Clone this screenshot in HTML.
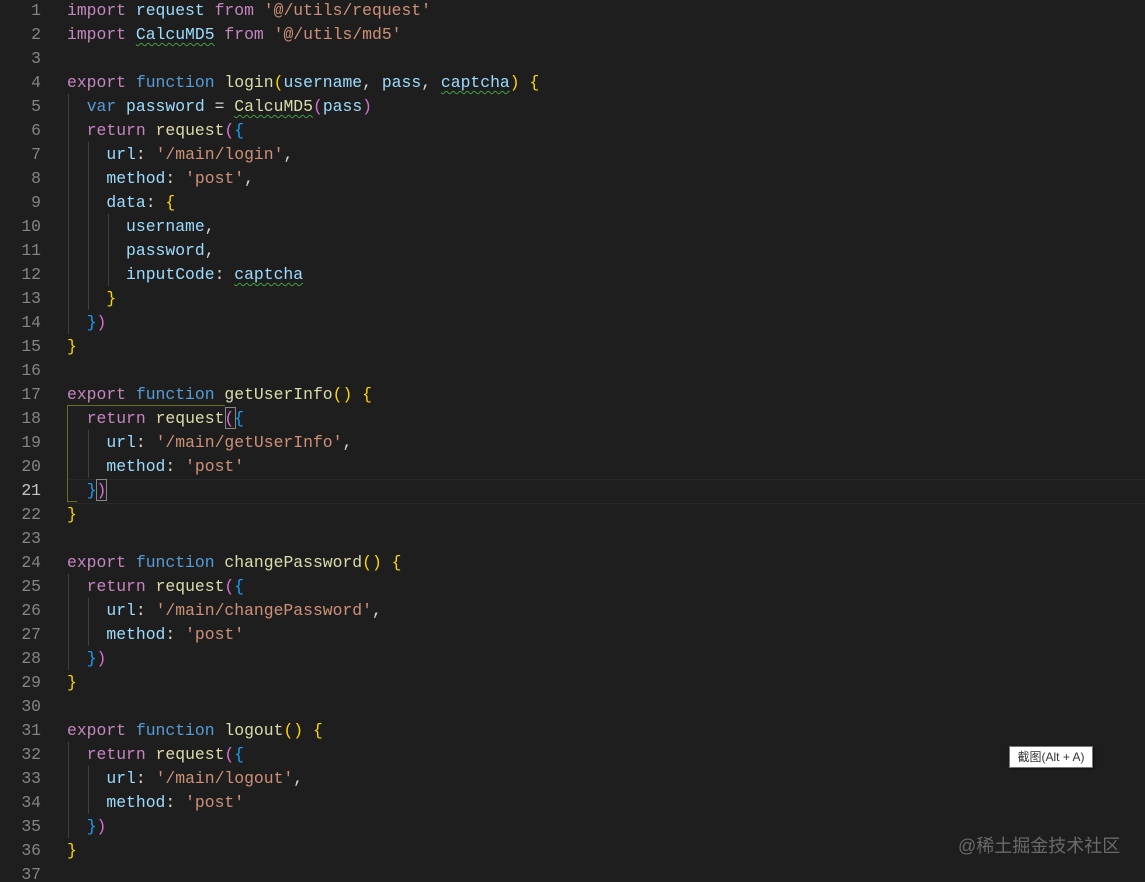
<!DOCTYPE html>
<html><head><meta charset="utf-8"><style>
html,body{margin:0;padding:0;background:#1e1e1e;width:1145px;height:882px;overflow:hidden;position:relative}
.ln{position:absolute;left:0;width:41px;text-align:right;color:#858585;font:16.4px/24px "Liberation Mono",monospace}
.cl{position:absolute;left:67px;white-space:pre;color:#d4d4d4;font:16.4px/24px "Liberation Mono",monospace}
.k{color:#c586c0}.b{color:#569cd6}.f{color:#dcdcaa}.v{color:#9cdcfe}.s{color:#ce9178}
.g1{color:#ffd700}.g2{color:#da70d6}.g3{color:#179fff}
.w{text-decoration:underline wavy #3fa03f;text-decoration-thickness:1px;text-underline-offset:3px}
.guide{position:absolute;width:1px;background:#404040}
</style></head><body>
<div style="position:absolute;left:67px;top:479px;width:1078px;height:23px;border-top:1px solid #282828;border-bottom:1px solid #282828"></div>
<div style="position:absolute;left:67px;top:405px;width:0;height:96px;border-left:1px solid #6b6b2a"></div>
<div style="position:absolute;left:67px;top:405px;width:158px;height:0;border-top:1px solid #6b6b2a"></div>
<div style="position:absolute;left:67px;top:501px;width:10px;height:0;border-top:1px solid #6b6b2a"></div>
<div style="position:absolute;left:225px;top:407px;width:9px;height:20px;border:1px solid #888"></div>
<div style="position:absolute;left:96px;top:479px;width:9px;height:20px;border:1px solid #888"></div>
<div class="guide" style="left:68px;top:94px;height:240px"></div>
<div class="guide" style="left:88px;top:142px;height:168px"></div>
<div class="guide" style="left:108px;top:214px;height:72px"></div>
<div class="guide" style="left:88px;top:430px;height:48px"></div>
<div class="guide" style="left:68px;top:574px;height:96px"></div>
<div class="guide" style="left:88px;top:598px;height:48px"></div>
<div class="guide" style="left:68px;top:742px;height:96px"></div>
<div class="guide" style="left:88px;top:766px;height:48px"></div>
<div id="c"></div>
<div style="position:absolute;left:1009px;top:746px;width:82px;height:20px;background:#fff;border:1px solid #777;box-shadow:1px 1px 2px rgba(0,0,0,.5);font:12px/20px 'Liberation Sans','Noto Sans CJK SC',sans-serif;color:#333;text-align:center">截图(Alt + A)</div>
<div style="position:absolute;left:958px;top:834px;font:18px/24px 'Liberation Sans','Noto Sans CJK SC',sans-serif;color:#6a6a6a">@稀土掘金技术社区</div>
<script>
var L=[
'<span class="k">import</span> <span class="v">request</span> <span class="k">from</span> <span class="s">\'@/utils/request\'</span>',
'<span class="k">import</span> <span class="v w">CalcuMD5</span> <span class="k">from</span> <span class="s">\'@/utils/md5\'</span>',
'',
'<span class="k">export</span> <span class="b">function</span> <span class="f">login</span><span class="g1">(</span><span class="v">username</span>, <span class="v">pass</span>, <span class="v w">captcha</span><span class="g1">)</span> <span class="g1">{</span>',
'  <span class="b">var</span> <span class="v">password</span> = <span class="f w">CalcuMD5</span><span class="g2">(</span><span class="v">pass</span><span class="g2">)</span>',
'  <span class="k">return</span> <span class="f">request</span><span class="g2">(</span><span class="g3">{</span>',
'    <span class="v">url</span>: <span class="s">\'/main/login\'</span>,',
'    <span class="v">method</span>: <span class="s">\'post\'</span>,',
'    <span class="v">data</span>: <span class="g1">{</span>',
'      <span class="v">username</span>,',
'      <span class="v">password</span>,',
'      <span class="v">inputCode</span>: <span class="v w">captcha</span>',
'    <span class="g1">}</span>',
'  <span class="g3">}</span><span class="g2">)</span>',
'<span class="g1">}</span>',
'',
'<span class="k">export</span> <span class="b">function</span> <span class="f">getUserInfo</span><span class="g1">()</span> <span class="g1">{</span>',
'  <span class="k">return</span> <span class="f">request</span><span class="g2">(</span><span class="g3">{</span>',
'    <span class="v">url</span>: <span class="s">\'/main/getUserInfo\'</span>,',
'    <span class="v">method</span>: <span class="s">\'post\'</span>',
'  <span class="g3">}</span><span class="g2">)</span>',
'<span class="g1">}</span>',
'',
'<span class="k">export</span> <span class="b">function</span> <span class="f">changePassword</span><span class="g1">()</span> <span class="g1">{</span>',
'  <span class="k">return</span> <span class="f">request</span><span class="g2">(</span><span class="g3">{</span>',
'    <span class="v">url</span>: <span class="s">\'/main/changePassword\'</span>,',
'    <span class="v">method</span>: <span class="s">\'post\'</span>',
'  <span class="g3">}</span><span class="g2">)</span>',
'<span class="g1">}</span>',
'',
'<span class="k">export</span> <span class="b">function</span> <span class="f">logout</span><span class="g1">()</span> <span class="g1">{</span>',
'  <span class="k">return</span> <span class="f">request</span><span class="g2">(</span><span class="g3">{</span>',
'    <span class="v">url</span>: <span class="s">\'/main/logout\'</span>,',
'    <span class="v">method</span>: <span class="s">\'post\'</span>',
'  <span class="g3">}</span><span class="g2">)</span>',
'<span class="g1">}</span>',
''];
var h='';
for(var i=0;i<L.length;i++){var t=-1+i*24;
h+='<div class="ln" style="top:'+t+'px'+(i==20?';color:#c6c6c6':'')+'">'+(i+1)+'</div><div class="cl" style="top:'+t+'px">'+L[i]+'</div>';}
document.getElementById('c').innerHTML=h;
</script>
</body></html>
